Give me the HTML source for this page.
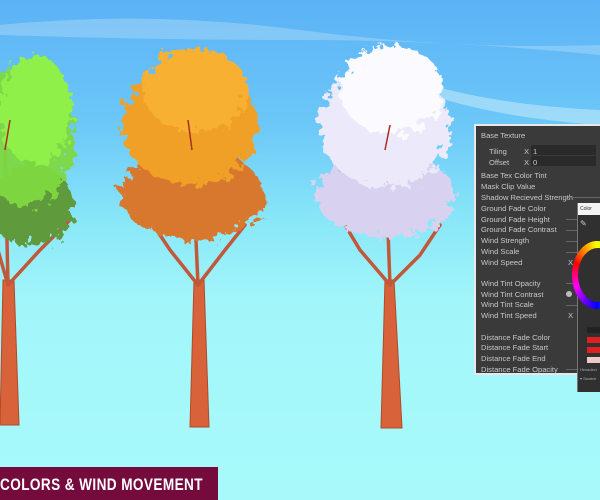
<!DOCTYPE html>
<html style="background:#a8fafa"><head><meta charset="utf-8"><style>
*{margin:0;padding:0}
html,body{width:600px;height:500px;overflow:hidden}
body{position:relative;font-family:"Liberation Sans",sans-serif;background:linear-gradient(#5cb2f6 0%,#6cc8f8 25%,#8ae8f8 45%,#a2f6fa 60%,#a8fafa 100%)}
svg{position:absolute;left:0;top:0}
.panel{position:absolute;left:474px;top:124px;width:130px;height:251px;background:#3a3a3a;border:2px solid #e8e8e8;border-right:none;box-sizing:border-box}
.r{position:absolute;left:5px;font-size:7.6px;color:#c8c8c8;white-space:nowrap}
.ln{position:absolute;height:1px;background:#666}
.pop{position:absolute;left:577px;top:203px;width:30px;height:189px;background:#303030;border-left:1px solid #777}
.banner{position:absolute;left:-6px;top:467px;width:224px;height:40px;background:#750b3c}
.banner span{position:absolute;left:6px;top:8px;font:bold 17px "Liberation Sans",sans-serif;color:#fff;letter-spacing:0.5px;white-space:nowrap;transform:scaleX(0.8);transform-origin:left}
</style></head><body>
<svg width="600" height="500">
<defs>
<filter id="n" x="-20%" y="-20%" width="140%" height="140%"><feTurbulence type="fractalNoise" baseFrequency="0.12" numOctaves="3" seed="3"/><feDisplacementMap in="SourceGraphic" scale="22"/></filter>
</defs>
<path d="M0 25 Q150 10 300 30 T600 45 L600 55 Q450 40 300 40 T0 35Z" fill="#a8d8f8" opacity=".5"/>
<path d="M430 85 Q500 105 600 110 L600 125 Q500 118 430 95Z" fill="#c0e8fa" opacity=".6"/>
<g fill="#d8623a" stroke="#b04a2a" stroke-width="1">
<path d="M3 280 L14 280 L19 425 L0 425Z"/>
<path d="M194 280 L204 280 L209 427 L190 427Z"/>
<path d="M385 280 L394 280 L402 428 L381 428Z"/>
</g>
<g stroke="#c0583a" stroke-width="3.5" fill="none" stroke-linecap="round">
<path d="M8 285 L40 250 L70 220"/><path d="M8 285 L-5 240"/><path d="M8 285 L5 150"/>
<path d="M198 285 L170 250 L150 220"/><path d="M198 285 L225 250 L245 225"/><path d="M198 285 L192 150"/>
<path d="M390 285 L360 250 L345 225"/><path d="M390 285 L420 255 L440 225"/><path d="M390 285 L385 150"/>
</g>
<g filter="url(#n)">
<ellipse cx="30" cy="205" rx="44" ry="40" fill="#5f9a3c"/>
<ellipse cx="25" cy="135" rx="50" ry="70" fill="#7ed840" opacity=".95"/>
<ellipse cx="35" cy="110" rx="36" ry="55" fill="#8ef04a"/>
<ellipse cx="192" cy="195" rx="72" ry="45" fill="#d8782e"/>
<ellipse cx="190" cy="125" rx="68" ry="60" fill="#f0a028"/>
<ellipse cx="195" cy="90" rx="52" ry="42" fill="#f8b030"/>
<ellipse cx="385" cy="195" rx="70" ry="42" fill="#d8d2f0"/>
<ellipse cx="385" cy="125" rx="66" ry="62" fill="#eceafa"/>
<ellipse cx="392" cy="90" rx="52" ry="44" fill="#fafaff"/>
</g>
<g stroke="#a83020" stroke-width="1.5" fill="none">
<path d="M192 150 L188 120"/><path d="M385 150 L390 125"/><path d="M5 150 L10 120"/>
</g>
</svg>
<div class="panel">
<div class="r" style="top:5px">Base Texture</div>
<div class="r" style="top:21px;left:13px">Tiling</div><div class="r" style="top:21px;left:48px">X</div><div style="position:absolute;left:55px;top:19px;width:65px;height:10px;background:#2a2a2a"></div><div class="r" style="top:21px;left:57px">1</div>
<div class="r" style="top:32px;left:13px">Offset</div><div class="r" style="top:32px;left:48px">X</div><div style="position:absolute;left:55px;top:30px;width:65px;height:10px;background:#2a2a2a"></div><div class="r" style="top:32px;left:57px">0</div>
<div class="r" style="top:45px">Base Tex Color Tint</div>
<div class="r" style="top:56px">Mask Clip Value</div>
<div class="r" style="top:67px">Shadow Recieved Strength</div><div class="ln" style="left:92px;top:71px;width:40px"></div>
<div class="r" style="top:78px">Ground Fade Color</div>
<div class="r" style="top:89px">Ground Fade Height</div><div class="ln" style="left:90px;top:93px;width:12px"></div>
<div class="r" style="top:99px">Ground Fade Contrast</div><div class="ln" style="left:90px;top:104px;width:12px"></div>
<div class="r" style="top:110px">Wind Strength</div><div class="ln" style="left:90px;top:115px;width:12px"></div>
<div class="r" style="top:121px">Wind Scale</div><div class="ln" style="left:90px;top:126px;width:12px"></div>
<div class="r" style="top:132px">Wind Speed</div><div class="r" style="top:132px;left:92px">X 2</div>
<div class="r" style="top:153px">Wind Tint Opacity</div><div class="ln" style="left:90px;top:157px;width:12px"></div>
<div class="r" style="top:164px">Wind Tint Contrast</div><div style="position:absolute;left:90px;top:165px;width:6px;height:6px;border-radius:3px;background:#bbb"></div>
<div class="r" style="top:174px">Wind Tint Scale</div><div class="ln" style="left:90px;top:179px;width:12px"></div>
<div class="r" style="top:185px">Wind Tint Speed</div><div class="r" style="top:185px;left:92px">X</div>
<div class="r" style="top:207px">Distance Fade Color</div>
<div class="r" style="top:217px">Distance Fade Start</div>
<div class="r" style="top:228px">Distance Fade End</div>
<div class="r" style="top:239px">Distance Fade Opacity</div><div class="ln" style="left:90px;top:243px;width:12px"></div>
</div>
<div class="pop">
<div style="position:absolute;left:0;top:0;width:30px;height:12px;background:#f4f4f4;font-size:5px;color:#333;padding:3px 0 0 2px;box-sizing:border-box">Color</div>
<div style="position:absolute;left:2px;top:16px;color:#ccc;font-size:8px">✎</div>
<div style="position:absolute;left:-6px;top:38px;width:50px;height:68px;border-radius:50%;background:conic-gradient(#ff0,#0f0,#0ff,#00f,#f0f,#f00,#ff0);"></div>
<div style="position:absolute;left:0px;top:45px;width:40px;height:54px;border-radius:50%;background:#303030"></div>
<div style="position:absolute;left:9px;top:124px;width:21px;height:6px;background:#222"></div>
<div style="position:absolute;left:9px;top:134px;width:21px;height:6px;background:#e02020"></div>
<div style="position:absolute;left:9px;top:144px;width:21px;height:6px;background:#e02020"></div>
<div style="position:absolute;left:9px;top:154px;width:21px;height:6px;background:#f0c8c8"></div>
<div style="position:absolute;left:2px;top:164px;font-size:4px;color:#aaa">Hexadeci</div>
<div style="position:absolute;left:2px;top:173px;font-size:4px;color:#aaa">▾ Swatch</div>
</div>
<div class="banner"><span>COLORS &amp; WIND MOVEMENT</span></div>
</body></html>
